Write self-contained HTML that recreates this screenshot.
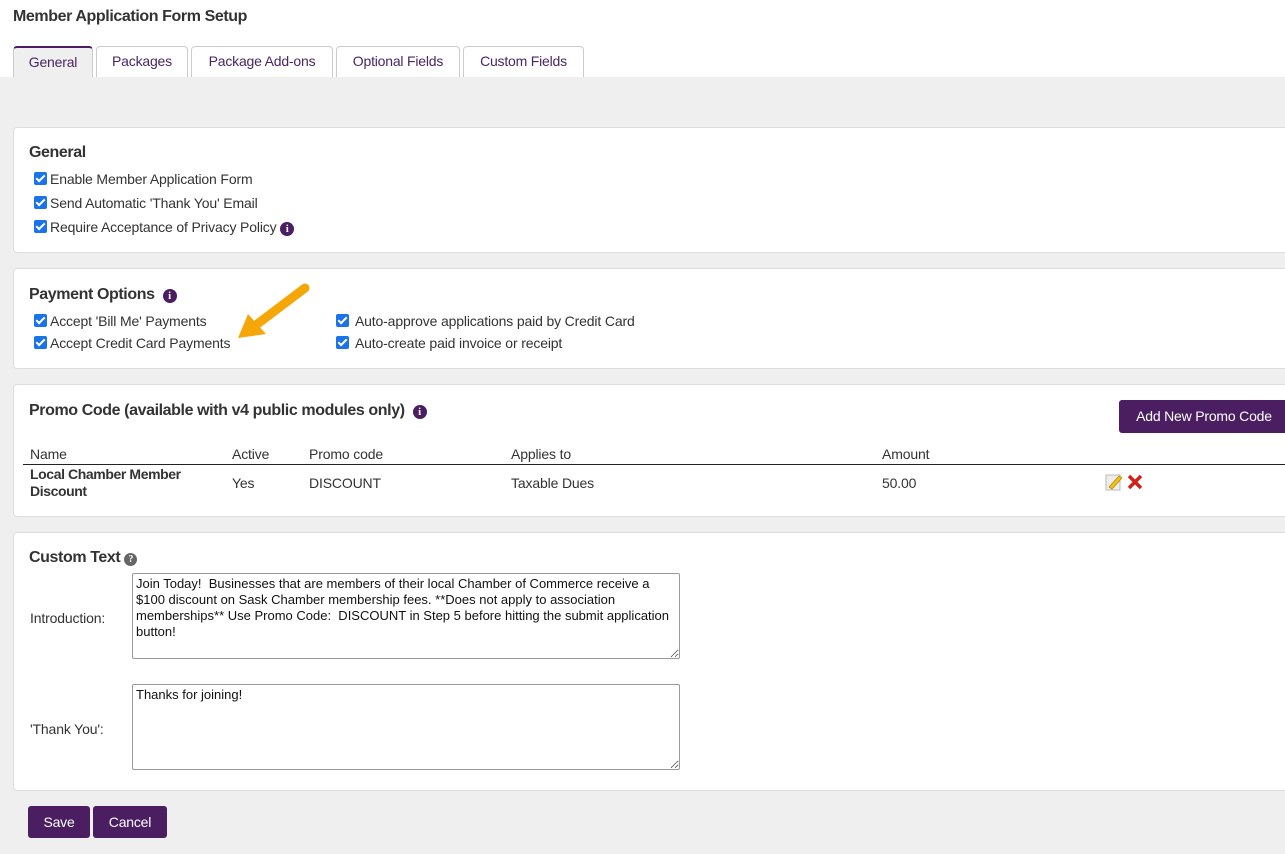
<!DOCTYPE html>
<html><head><style>
*{box-sizing:border-box}
body{margin:0;width:1285px;height:854px;overflow:hidden;background:#efefef;font-family:"Liberation Sans",Arial,sans-serif;color:#333;font-size:14px;position:relative}
.top{position:absolute;left:0;top:0;width:1285px;height:77px;background:#fff}
h1{position:absolute;left:13px;top:8px;margin:0;font-size:16px;font-weight:bold;color:#333;letter-spacing:-0.4px}
.tab{position:absolute;top:46px;height:31px;border:1px solid #ccc;border-bottom:none;border-radius:4px 4px 0 0;background:#fff;color:#4a2563;font-size:14px;text-align:center;line-height:29px;letter-spacing:-0.2px}
.tab.act{background:#efefef;border-top:2px solid #4a1e61}
.panel{position:absolute;left:13px;width:1290px;background:#fff;border:1px solid #ddd;border-radius:4px}
.h{position:absolute;font-weight:bold;font-size:16px;color:#333;letter-spacing:-0.4px}
.cb{position:absolute;font-size:14px;color:#333;white-space:nowrap;letter-spacing:-0.15px}
.cb i{display:inline-block;width:13px;height:13px;background:#1a73e8;border-radius:2px;vertical-align:-1px;margin-right:3px;position:relative}
.cb i:after{content:"";position:absolute;left:4px;top:1px;width:3px;height:7px;border:solid #fff;border-width:0 2px 2px 0;transform:rotate(45deg)}
.info{display:inline-block;width:14px;height:14px;border-radius:50%;background:#4a1e61;color:#fff;font-size:11px;font-weight:bold;text-align:center;line-height:14px;font-family:"Liberation Serif",serif;vertical-align:0px;letter-spacing:0}
.t{position:absolute;font-size:14px;color:#333;white-space:nowrap;letter-spacing:-0.15px}
.btn{position:absolute;background:#4a1e61;color:#fff;border-radius:3px;font-size:14px;text-align:center;letter-spacing:-0.2px}
textarea{position:absolute;border:1px solid #999;border-radius:2px;font-family:"Liberation Sans",Arial,sans-serif;font-size:13px;color:#111;padding:2px 3px;resize:both;line-height:16px;overflow:hidden}
</style></head><body>
<div class="top"></div>
<h1>Member Application Form Setup</h1>
<div class="tab act" style="left:13px;width:80px">General</div>
<div class="tab" style="left:96px;width:92px">Packages</div>
<div class="tab" style="left:191px;width:142px">Package Add-ons</div>
<div class="tab" style="left:336px;width:124px">Optional Fields</div>
<div class="tab" style="left:463px;width:121px">Custom Fields</div>

<div class="panel" style="top:127px;height:126px"></div>
<div class="h" style="left:29px;top:144px">General</div>
<div class="cb" style="left:34px;top:171px"><i></i>Enable Member Application Form</div>
<div class="cb" style="left:34px;top:195px"><i></i>Send Automatic 'Thank You' Email</div>
<div class="cb" style="left:34px;top:219px"><i></i>Require Acceptance of Privacy Policy <span class="info">i</span></div>

<div class="panel" style="top:268px;height:101px"></div>
<div class="h" style="left:29px;top:286px">Payment Options <span class="info" style="margin-left:4px">i</span></div>
<div class="cb" style="left:34px;top:313px"><i></i>Accept 'Bill Me' Payments</div>
<div class="cb" style="left:34px;top:335px"><i></i>Accept Credit Card Payments</div>
<div class="cb" style="left:336px;top:313px"><i></i> Auto-approve applications paid by Credit Card</div>
<div class="cb" style="left:336px;top:335px"><i></i> Auto-create paid invoice or receipt</div>
<svg style="position:absolute;left:230px;top:278px" width="90" height="70"><path d="M75 10 L22 50" stroke="#f5a70a" stroke-width="9" stroke-linecap="round"/><path d="M8 60 L18 36 L36 56 Z" fill="#f5a70a"/></svg>

<div class="panel" style="top:384px;height:133px"></div>
<div class="h" style="left:29px;top:402px">Promo Code (available with v4 public modules only) <span class="info" style="margin-left:4px">i</span></div>
<div class="btn" style="left:1119px;top:400px;width:170px;height:33px;line-height:33px">Add New Promo Code</div>
<div class="t" style="left:30px;top:446px">Name</div>
<div class="t" style="left:232px;top:446px">Active</div>
<div class="t" style="left:309px;top:446px">Promo code</div>
<div class="t" style="left:511px;top:446px">Applies to</div>
<div class="t" style="left:882px;top:446px">Amount</div>
<div style="position:absolute;left:23px;top:464px;width:1262px;height:1px;background:#222"></div>
<div class="t" style="left:30px;top:466px;font-weight:bold;line-height:17px;letter-spacing:-0.4px">Local Chamber Member<br>Discount</div>
<div class="t" style="left:232px;top:475px">Yes</div>
<div class="t" style="left:309px;top:475px">DISCOUNT</div>
<div class="t" style="left:511px;top:475px">Taxable Dues</div>
<div class="t" style="left:882px;top:475px">50.00</div>
<svg style="position:absolute;left:1105px;top:472px" width="40" height="20"><rect x="1" y="3" width="14" height="15" fill="#eee" stroke="#bbb"/><path d="M4 15 L14 4 L17 6 L7 17 Z" fill="#f1c40f" stroke="#b8860b" stroke-width=".8"/><path d="M24 4 L36 16 M36 4 L24 16" stroke="#d0201a" stroke-width="3.5"/></svg>

<div class="panel" style="top:532px;height:259px"></div>
<div class="h" style="left:29px;top:549px">Custom Text <span class="info" style="background:#666;width:13px;height:13px;line-height:13px;font-size:10px">?</span></div>
<div class="t" style="left:30px;top:610px">Introduction:</div>
<textarea style="left:132px;top:573px;width:548px;height:86px">Join Today!  Businesses that are members of their local Chamber of Commerce receive a $100 discount on Sask Chamber membership fees. **Does not apply to association memberships** Use Promo Code:  DISCOUNT in Step 5 before hitting the submit application button!</textarea>
<div class="t" style="left:30px;top:721px">'Thank You':</div>
<textarea style="left:132px;top:684px;width:548px;height:86px">Thanks for joining!</textarea>

<div class="btn" style="left:28px;top:806px;width:62px;height:32px;line-height:32px">Save</div>
<div class="btn" style="left:93px;top:806px;width:74px;height:32px;line-height:32px">Cancel</div>
</body></html>
